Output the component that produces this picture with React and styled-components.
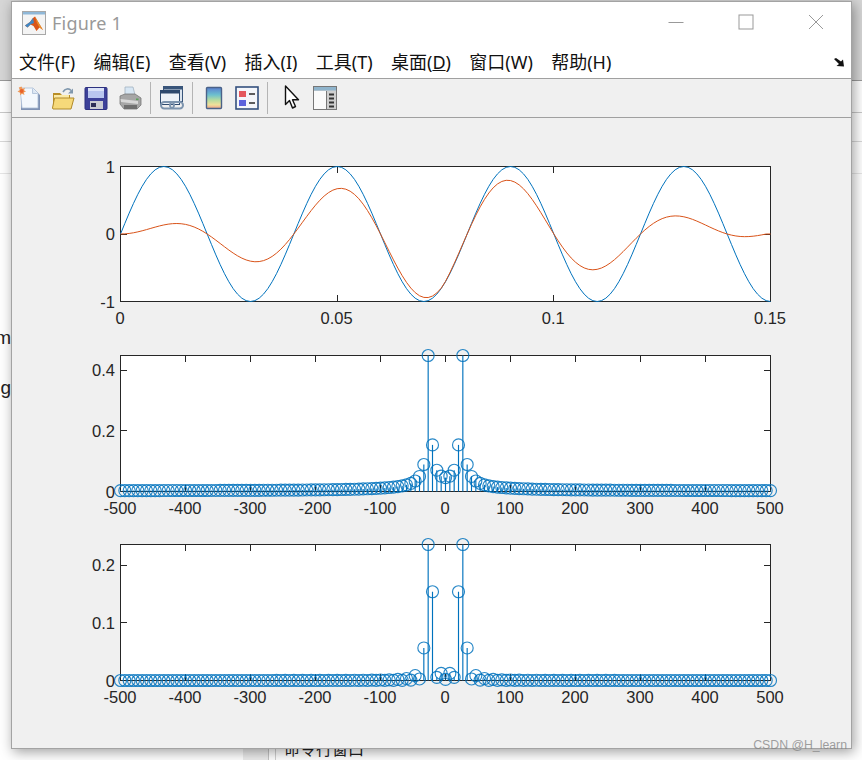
import React from "react";
import styled, { createGlobalStyle } from "styled-components";

const GlobalStyle = createGlobalStyle`
  html, body {
    margin: 0;
    padding: 0;
    background: #fff;
  }
`;

// signal data: 25 Hz sine, 150 samples at 1 kHz, plain and with a triangular window
const N = 150;
const FS = 1000;
const sine = (n) => Math.sin((2 * Math.PI * 25 * n) / FS);
const bartlett = (n) => 1 - Math.abs((2 * n) / (N - 1) - 1);
const signal = Array.from({ length: N }, (_, n) => sine(n));
const windowed = signal.map((v, n) => v * bartlett(n));

const spectrum = (xs) => {
  const out = [];
  for (let k = -75; k <= 75; k++) {
    let re = 0;
    let im = 0;
    xs.forEach((v, n) => {
      const a = (-2 * Math.PI * k * n) / N;
      re += v * Math.cos(a);
      im += v * Math.sin(a);
    });
    out.push([(k * FS) / N, Math.hypot(re, im) / N]);
  }
  return out;
};

const PLOT_W = 650;
const AX_X = 108.5;
const AX_Y = 10.5;

const Desktop = styled.div`
  position: relative;
  width: 862px;
  height: 760px;
  overflow: hidden;
  background: #fff;
  display: flex;
  flex-direction: column;
  font-family: "Noto Sans", "Noto Sans CJK SC", sans-serif;
`;

const TopBand = styled.div`
  height: 80px;
  flex: none;
  background: #d6d6d6;
  border-bottom: 1px solid #9a9a9a;
`;

const Band = styled.div`
  height: ${(p) => p.$h}px;
  flex: none;
  border-bottom: 1px solid ${(p) => p.$line};
`;

const ClippedText = styled.div`
  width: 11px;
  margin-top: 153px;
  display: flex;
  flex-direction: column;
  align-items: flex-end;
  gap: 28px;
  overflow: hidden;
  font-family: "Liberation Sans", sans-serif;
  font-size: 19px;
  line-height: 22px;
  color: #222;
`;

const BackRow = styled.div`
  margin-top: auto;
  height: 16px;
  display: flex;
  padding-left: 243px;
`;

const Gutter = styled.div`
  width: 25px;
  background: #ececec;
  border-right: 1px solid #c4c4c4;
`;

const PaneEdge = styled.div`
  width: 6px;
  border-right: 1px solid #d0d0d0;
  margin-right: 8px;
`;

const PaneTitle = styled.div`
  font-size: 16px;
  line-height: 18px;
  margin-top: -4px;
  color: #222;
`;

const Window = styled.div`
  position: absolute;
  left: 11px;
  top: 1px;
  width: 841px;
  height: 748px;
  box-sizing: border-box;
  border: 1px solid #a3a3a3;
  background: #f0f0f0;
  box-shadow: 2px 3px 12px rgba(0, 0, 0, 0.38);
  display: flex;
  flex-direction: column;
`;

const TitleBar = styled.div`
  height: 42px;
  flex: none;
  background: #fff;
  display: flex;
  align-items: center;
  padding-left: 10px;
`;

const Title = styled.span`
  margin-left: 6px;
  font-size: 18px;
  color: #999;
  letter-spacing: 0.2px;
`;

const WindowControls = styled.div`
  margin-left: auto;
  display: flex;
  align-items: center;
  height: 100%;
  padding-right: 27px;
  gap: 54px;
  margin-top: -2px;
`;

const MenuBar = styled.div`
  height: 35px;
  flex: none;
  box-sizing: border-box;
  background: #fff;
  border-bottom: 1px solid #a0a0a0;
  display: flex;
  align-items: center;
  gap: 18.35px;
  padding: 1px 6px 0 7px;
`;

const MenuItem = styled.span`
  font-size: 18px;
  line-height: 24px;
  color: #111;
  white-space: nowrap;
`;

const Accel = styled.span`
  text-decoration: underline;
`;

const DockArrow = styled.svg`
  margin-left: auto;
  display: block;
`;

const Toolbar = styled.div`
  height: 39px;
  flex: none;
  box-sizing: border-box;
  background: #f0f0f0;
  border-bottom: 1px solid #a0a0a0;
  display: flex;
  align-items: center;
  padding-left: 0.5px;
`;

const Tool = styled.div`
  width: 33.5px;
  height: 26px;
  flex: none;
  display: flex;
  align-items: center;
  justify-content: center;
`;

const ToolSep = styled.div`
  width: 1px;
  height: 32px;
  flex: none;
  margin: 0 ${(p) => p.$after || 3.7}px 0 3.7px;
  background: #b4b4b4;
`;

const Canvas = styled.div`
  flex: 1;
  padding-top: 38px;
  display: flex;
  flex-direction: column;
`;

const PlotSvg = styled.svg`
  display: block;
  flex: none;
  overflow: visible;
`;

const TickLabel = styled.text`
  font-family: "Liberation Sans", Arial, sans-serif;
  font-size: 16.5px;
  fill: #262626;
`;

const Watermark = styled.div`
  position: absolute;
  right: 15px;
  bottom: 8px;
  font-family: "Liberation Sans", sans-serif;
  font-size: 12.3px;
  color: rgba(130, 130, 130, 0.75);
`;

const Axes = ({ h, xTicks, yTicks, xLim, yLim, children }) => {
  const sx = (v) => AX_X + ((v - xLim[0]) / (xLim[1] - xLim[0])) * PLOT_W;
  const sy = (v) => AX_Y + h - ((v - yLim[0]) / (yLim[1] - yLim[0])) * h;
  const ticks = [];
  xTicks.forEach((t) => {
    const x = Math.round(sx(t) - 0.5) + 0.5;
    ticks.push(`M${x} ${AX_Y}v6.5M${x} ${AX_Y + h}v-6.5`);
  });
  yTicks.forEach((t) => {
    const y = Math.round(sy(t) - 0.5) + 0.5;
    ticks.push(`M${AX_X} ${y}h6.5M${AX_X + PLOT_W} ${y}h-6.5`);
  });
  return (
    <PlotSvg width="839" height="189" viewBox="0 0 839 189">
      <rect x={AX_X} y={AX_Y} width={PLOT_W} height={h} fill="#fff" />
      <rect x={AX_X} y={AX_Y} width={PLOT_W} height={h} fill="none" stroke="#262626" />
      <path d={ticks.join("")} stroke="#262626" fill="none" />
      {children(sx, sy)}
      {xTicks.map((t) => (
        <TickLabel key={t} x={sx(t) - 0.5} y={AX_Y + h + 22} textAnchor="middle">
          {t}
        </TickLabel>
      ))}
      {yTicks.map((t) => (
        <TickLabel key={t} x={103} y={sy(t) + 6} textAnchor="end">
          {t}
        </TickLabel>
      ))}
    </PlotSvg>
  );
};

const WavePlot = () => {
  const steps = Array.from({ length: 151 }, (_, n) => n);
  const line = (fn, sx, sy) =>
    steps.map((n, i) => `${i ? "L" : "M"}${sx(n / FS).toFixed(2)} ${sy(fn(n)).toFixed(2)}`).join("");
  return (
    <Axes h={135} xTicks={[0, 0.05, 0.1, 0.15]} yTicks={[-1, 0, 1]} xLim={[0, 0.15]} yLim={[-1, 1]}>
      {(sx, sy) => (
        <g fill="none" strokeWidth="1">
          <path d={line(sine, sx, sy)} stroke="#0072bd" />
          <path d={line((n) => sine(n) * bartlett(Math.min(n, 149)), sx, sy)} stroke="#d95319" />
        </g>
      )}
    </Axes>
  );
};

const StemPlot = ({ data, yTicks }) => {
  const top = Math.max(...data.map((d) => d[1]));
  return (
    <Axes
      h={136}
      xTicks={[-500, -400, -300, -200, -100, 0, 100, 200, 300, 400, 500]}
      yTicks={yTicks}
      xLim={[-500, 500]}
      yLim={[0, top]}
    >
      {(sx, sy) => (
        <g fill="none" stroke="#0072bd" strokeWidth="1.15">
          {data.map(([f, v]) => (
            <g key={f}>
              <line x1={sx(f)} x2={sx(f)} y1={sy(0)} y2={sy(v)} />
              <circle cx={sx(f)} cy={sy(v)} r="6" strokeOpacity="0.85" />
            </g>
          ))}
        </g>
      )}
    </Axes>
  );
};

const MatlabIcon = () => (
  <svg width="24" height="24" viewBox="0 0 24 24">
    <rect x="0.5" y="0.5" width="23" height="23" fill="#f4f4f4" stroke="#a8a8a8" />
    <rect x="1" y="1" width="22" height="2.5" fill="#8fb8d8" />
    <path d="M3 14.5L8 11L11 7L13 5.5L15 9L18 14L21 19L17.5 16.5L14.5 20L11.5 15L8.5 13.5L5.5 16.5Z" fill="#d9551a" />
    <path d="M3 14.5L8 11L11 7L12 12L8.5 13.5L5.5 16.5Z" fill="#3f87c4" />
    <path d="M13 5.5L15 9L18 14L21 19L17.5 16.5L15 12Z" fill="#e8902c" />
  </svg>
);

const NewIcon = () => (
  <svg width="24" height="24" viewBox="0 0 24 24">
    <path d="M4 3H17L23 9V24H4Z" fill="#7f93b5" />
    <path d="M3 2H16L21 7V22H5Z" fill="#f3f8fd" stroke="#a9bcd6" strokeWidth="0.8" />
    <path d="M15.5 2.5V7.5H20.5" fill="#dbe6f2" stroke="#a9bcd6" strokeWidth="0.8" />
    <path d="M4.5 0.5L5.6 2.8L8 1.8L7 4.3L9 5.5L6.8 6.4L7.5 9L5 7.8L3 9.3L3 6.7L0.5 5.5L2.8 4L1.8 1.6Z" fill="#ef9a5a" />
    <circle cx="4.7" cy="5" r="1.9" fill="#e8622a" />
  </svg>
);

const OpenIcon = () => (
  <svg width="24" height="24" viewBox="0 0 24 24">
    <path d="M2 7H9L11 9H19V21H2Z" fill="#b98e27" />
    <path d="M3 9H18V13H3Z" fill="#fbeaa6" />
    <path d="M1.5 22L3.5 12H23L20 23H2Z" fill="#f6d97a" stroke="#b08a2a" strokeWidth="1" />
    <path d="M12 6C14 2.5 18 2 20 4.5" fill="none" stroke="#7f97ad" strokeWidth="1.6" />
    <path d="M22 2.5V7.5H17Z" fill="#7f97ad" />
  </svg>
);

const SaveIcon = () => (
  <svg width="24" height="24" viewBox="0 0 24 24">
    <rect x="1" y="1.5" width="22" height="22" rx="1" fill="#3d4199" stroke="#2d3180" />
    <rect x="4" y="2" width="16" height="10" fill="#b9c6ef" />
    <rect x="4" y="2" width="16" height="3" fill="#dbe3f8" />
    <rect x="6" y="15" width="13" height="8" fill="#c9cbd3" />
    <rect x="7" y="17" width="5" height="4" fill="#2d2f58" />
  </svg>
);

const PrintIcon = () => (
  <svg width="24" height="24" viewBox="0 0 24 24">
    <path d="M7 1H15L17 9H7Z" fill="#d7e6f3" stroke="#a2b2c0" strokeWidth="0.8" />
    <path d="M2 10L7 8H17L23 12V19L19 23H6L2 18Z" fill="#a6a6a6" stroke="#777" strokeWidth="0.8" />
    <path d="M2.5 13L20 15V18L3 16Z" fill="#d8d8d8" />
    <path d="M6 19H19V23H6Z" fill="#6f6f6f" />
    <rect x="18" y="12.5" width="2.5" height="1.6" fill="#5aa05a" />
  </svg>
);

const LinkIcon = () => (
  <svg width="26" height="26" viewBox="0 0 26 26">
    <rect x="4.5" y="1.5" width="19" height="15" fill="#dbe4ee" stroke="#39557a" />
    <rect x="4.5" y="1.5" width="19" height="3" fill="#39557a" />
    <rect x="1.5" y="5.5" width="19" height="14" fill="#eef3f8" stroke="#2f4a6e" />
    <rect x="1.5" y="5.5" width="19" height="3" fill="#2f4a6e" />
    <rect x="2" y="17" width="13" height="6.5" rx="3.2" fill="none" stroke="#7d94ae" strokeWidth="2" />
    <rect x="11" y="17" width="13" height="6.5" rx="3.2" fill="none" stroke="#7d94ae" strokeWidth="2" />
  </svg>
);

const ColorbarIcon = () => (
  <svg width="24" height="24" viewBox="0 0 24 24">
    <defs>
      <linearGradient id="cbar" x1="0" y1="0" x2="0" y2="1">
        <stop offset="0" stopColor="#5b7fd0" />
        <stop offset="0.35" stopColor="#6cc0cf" />
        <stop offset="0.6" stopColor="#b5dca0" />
        <stop offset="0.82" stopColor="#efe09a" />
        <stop offset="1" stopColor="#eea08a" />
      </linearGradient>
    </defs>
    <rect x="4.5" y="1.5" width="15" height="21" rx="1" fill="url(#cbar)" stroke="#4a6288" strokeWidth="1.4" />
  </svg>
);

const LegendIcon = () => (
  <svg width="24" height="24" viewBox="0 0 24 24">
    <rect x="1" y="1" width="22" height="22" fill="#f4f6fa" stroke="#34507e" strokeWidth="1.6" />
    <rect x="4" y="5" width="7" height="6" fill="#e4575d" />
    <rect x="4" y="14" width="7" height="6" fill="#5b62dc" />
    <path d="M14 8H20M14 17H20" stroke="#2b2b2b" strokeWidth="1.6" />
  </svg>
);

const CursorIcon = () => (
  <svg width="24" height="26" viewBox="0 0 24 26">
    <path d="M5.5 1V19.5L9.5 15.5L12.5 23L15.5 21.5L12.5 14.8H18.5Z" fill="#fff" stroke="#111" strokeWidth="1.4" strokeLinejoin="round" />
  </svg>
);

const PanelIcon = () => (
  <svg width="26" height="26" viewBox="0 0 26 26">
    <rect x="1.5" y="1.5" width="23" height="23" fill="#cfcfcf" stroke="#777" />
    <rect x="2" y="2" width="22" height="3.5" fill="#8fb4cc" />
    <rect x="2" y="6" width="12" height="18" fill="#fafafa" />
    <path d="M14.5 6V24" stroke="#777" />
    <path d="M17 9.5H22M17 13.5H22M17 17.5H22M17 21.5H22" stroke="#333" strokeWidth="1.8" />
  </svg>
);

const MENUS = [
  ["文件(F)"],
  ["编辑(E)"],
  ["查看(V)"],
  ["插入(I)"],
  ["工具(T)"],
  ["桌面(", "D", ")"],
  ["窗口(W)"],
  ["帮助(H)"],
];

const App = () => {
  return (
    <>
      <GlobalStyle />
      <Desktop>
        <TopBand />
        <Band $h={31} $line="#c8c8c8" />
        <Band $h={28} $line="#d8d8d8" />
        <Band $h={31} $line="#e6e6e6" />
        <ClippedText>
          <span>m</span>
          <span>g</span>
        </ClippedText>
        <BackRow>
          <Gutter />
          <PaneEdge />
          <PaneTitle>命令行窗口</PaneTitle>
        </BackRow>

        <Window>
          <TitleBar>
            <MatlabIcon />
            <Title>Figure 1</Title>
            <WindowControls>
              <svg width="16" height="16" viewBox="0 0 16 16">
                <path d="M0.5 8.5H15.5" stroke="#999" />
              </svg>
              <svg width="16" height="16" viewBox="0 0 16 16">
                <rect x="1" y="1" width="14" height="14" fill="none" stroke="#999" />
              </svg>
              <svg width="16" height="16" viewBox="0 0 16 16">
                <path d="M1 1L15 15M15 1L1 15" stroke="#999" />
              </svg>
            </WindowControls>
          </TitleBar>
          <MenuBar>
            {MENUS.map((m) => (
              <MenuItem key={m[0]}>
                {m[0]}
                {m[1] && <Accel>{m[1]}</Accel>}
                {m[2]}
              </MenuItem>
            ))}
            <DockArrow width="12" height="10" viewBox="0 0 12 10">
              <path d="M1 2L3 1L8 4.5L10 2.5L11 9.5L3.5 9L6 7Z" fill="#111" />
            </DockArrow>
          </MenuBar>
          <Toolbar>
            <Tool><NewIcon /></Tool>
            <Tool><OpenIcon /></Tool>
            <Tool><SaveIcon /></Tool>
            <Tool><PrintIcon /></Tool>
            <ToolSep />
            <Tool><LinkIcon /></Tool>
            <ToolSep />
            <Tool><ColorbarIcon /></Tool>
            <Tool><LegendIcon /></Tool>
            <ToolSep $after={6.5} />
            <Tool><CursorIcon /></Tool>
            <Tool><PanelIcon /></Tool>
          </Toolbar>
          <Canvas>
            <WavePlot />
            <StemPlot data={spectrum(signal)} yTicks={[0, 0.2, 0.4]} />
            <StemPlot data={spectrum(windowed)} yTicks={[0, 0.1, 0.2]} />
          </Canvas>
        </Window>

        <Watermark>CSDN @H_learn</Watermark>
      </Desktop>
    </>
  );
};

export default App;
